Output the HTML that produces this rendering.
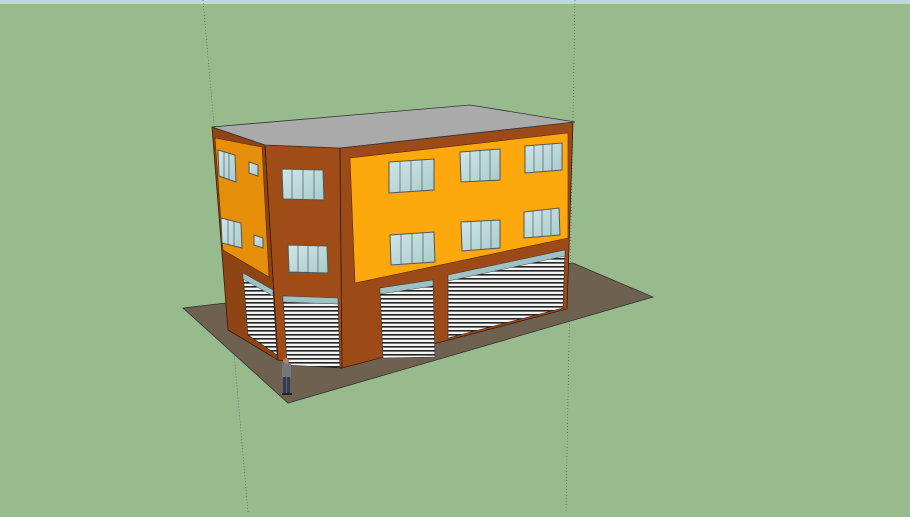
<!DOCTYPE html>
<html><head><style>html,body{margin:0;padding:0;background:#98bb8d;overflow:hidden}</style></head>
<body>
<svg width="910" height="512" viewBox="0 0 910 512" xmlns="http://www.w3.org/2000/svg">
<defs>
<pattern id="sh" width="8" height="4" patternUnits="userSpaceOnUse">
<rect width="8" height="4" fill="#f4f4f4"/><rect y="2" width="8" height="1.6" fill="#222"/>
</pattern>
<linearGradient id="gl" x1="0" y1="0" x2="1" y2="1"><stop offset="0" stop-color="#cfe6e6"/><stop offset="1" stop-color="#a9cccc"/></linearGradient>
</defs>
<rect width="910" height="512" fill="#98bb8d"/>
<rect width="910" height="4" fill="#bcd8e8"/>
<line x1="203" y1="0" x2="248" y2="512" stroke="#555" stroke-width="0.6" stroke-dasharray="1,2"/>
<line x1="575" y1="0" x2="566" y2="512" stroke="#555" stroke-width="0.6" stroke-dasharray="1,2"/>
<polygon points="183,308 573,263 653,297 288,403" fill="#6f6150" stroke="#333" stroke-width="0.8"/>
<!-- walls -->
<polygon points="212,127 265,145 278,360 228,330" fill="#8f4414" stroke="#3a1a05" stroke-width="0.8"/>
<polygon points="265,145 340,148 342,368 278,360" fill="#a04c17" stroke="#3a1a05" stroke-width="0.8"/>
<polygon points="340,148 573,122 567,309 342,368" fill="#9c4a18" stroke="#3a1a05" stroke-width="0.8"/>
<polygon points="212,127 470,105 575,122 340,148 265,145" fill="#aaaaaa" stroke="#333" stroke-width="0.8"/>
<!-- yellow -->
<polygon points="215,138 262,147 269,277 223,250" fill="#e68f0a" stroke="#5a2a00" stroke-width="0.6"/>
<polygon points="350,158 568,133 568,238 355,283" fill="#fda80c" stroke="#5a2a00" stroke-width="0.6"/>
<!-- shutters -->
<g stroke="#333" stroke-width="0.6" fill="url(#sh)">
<polygon points="380,288 433,280 435,357 383,358"/>
<polygon points="448,275 565,250 563,308 448,338"/>
<polygon points="283,296 338,298 340,368 287,365"/>
<polygon points="243,273 273,290 277,355 248,335"/>
</g>
<g fill="#9fc2c4" stroke="#444" stroke-width="0.5">
<polygon points="380,288 433,280 433,286 380,294"/>
<polygon points="448,275 565,250 565,256 448,281"/>
<polygon points="283,296 338,298 338,304 283,302"/>
<polygon points="243,273 273,290 273,296 243,279"/>
</g>
<!-- windows -->
<g fill="url(#gl)" stroke="#555" stroke-width="1">
<polygon points="389,162 434,159 434,190 389,193"/>
<polygon points="460,152 500,149 500,180 461,182"/>
<polygon points="525,146 562,143 562,170 525,173"/>
<polygon points="390,235 434,232 435,262 391,265"/>
<polygon points="461,222 500,220 500,248 462,251"/>
<polygon points="524,212 559,208 560,235 524,238"/>
<polygon points="282,169 323,170 324,200 283,199"/>
<polygon points="288,245 327,246 328,273 289,272"/>
<polygon points="218,150 235,155 236,182 219,176"/>
<polygon points="221,218 241,223 242,248 222,243"/>
<polygon points="249,162 258,165 258,176 249,173"/>
<polygon points="254,235 263,238 263,248 254,245"/>
</g>
<g stroke="#556" stroke-width="0.7">
<line x1="400" y1="161" x2="400" y2="192"/><line x1="411" y1="160" x2="411" y2="192"/><line x1="422" y1="160" x2="422" y2="191"/>
<line x1="470" y1="151" x2="470" y2="182"/><line x1="480" y1="151" x2="480" y2="181"/><line x1="490" y1="150" x2="490" y2="181"/>
<line x1="534" y1="145" x2="534" y2="172"/><line x1="543" y1="145" x2="543" y2="171"/><line x1="552" y1="144" x2="552" y2="171"/>
<line x1="401" y1="234" x2="401" y2="264"/><line x1="412" y1="234" x2="412" y2="264"/><line x1="423" y1="233" x2="423" y2="263"/>
<line x1="471" y1="221" x2="471" y2="250"/><line x1="481" y1="221" x2="481" y2="250"/><line x1="491" y1="220" x2="491" y2="249"/>
<line x1="533" y1="211" x2="533" y2="237"/><line x1="542" y1="210" x2="542" y2="236"/><line x1="551" y1="209" x2="551" y2="236"/>
<line x1="292" y1="170" x2="292" y2="199"/><line x1="303" y1="170" x2="303" y2="200"/><line x1="314" y1="170" x2="314" y2="200"/>
<line x1="298" y1="245" x2="298" y2="272"/><line x1="308" y1="246" x2="308" y2="273"/><line x1="318" y1="246" x2="318" y2="273"/>
<line x1="224" y1="152" x2="224" y2="178"/><line x1="229" y1="153" x2="229" y2="180"/>
<line x1="228" y1="220" x2="228" y2="245"/><line x1="234" y1="221" x2="234" y2="246"/>
</g>
<!-- person -->
<g>
<circle cx="286" cy="361" r="3" fill="#b08060"/>
<rect x="282" y="364" width="9" height="14" fill="#777"/>
<rect x="283" y="377" width="3" height="17" fill="#2d3a5a"/>
<rect x="287" y="377" width="3" height="17" fill="#2d3a5a"/>
<rect x="282" y="393" width="5" height="2" fill="#222"/><rect x="287" y="393" width="5" height="2" fill="#222"/>
</g>
</svg>
</body></html>
